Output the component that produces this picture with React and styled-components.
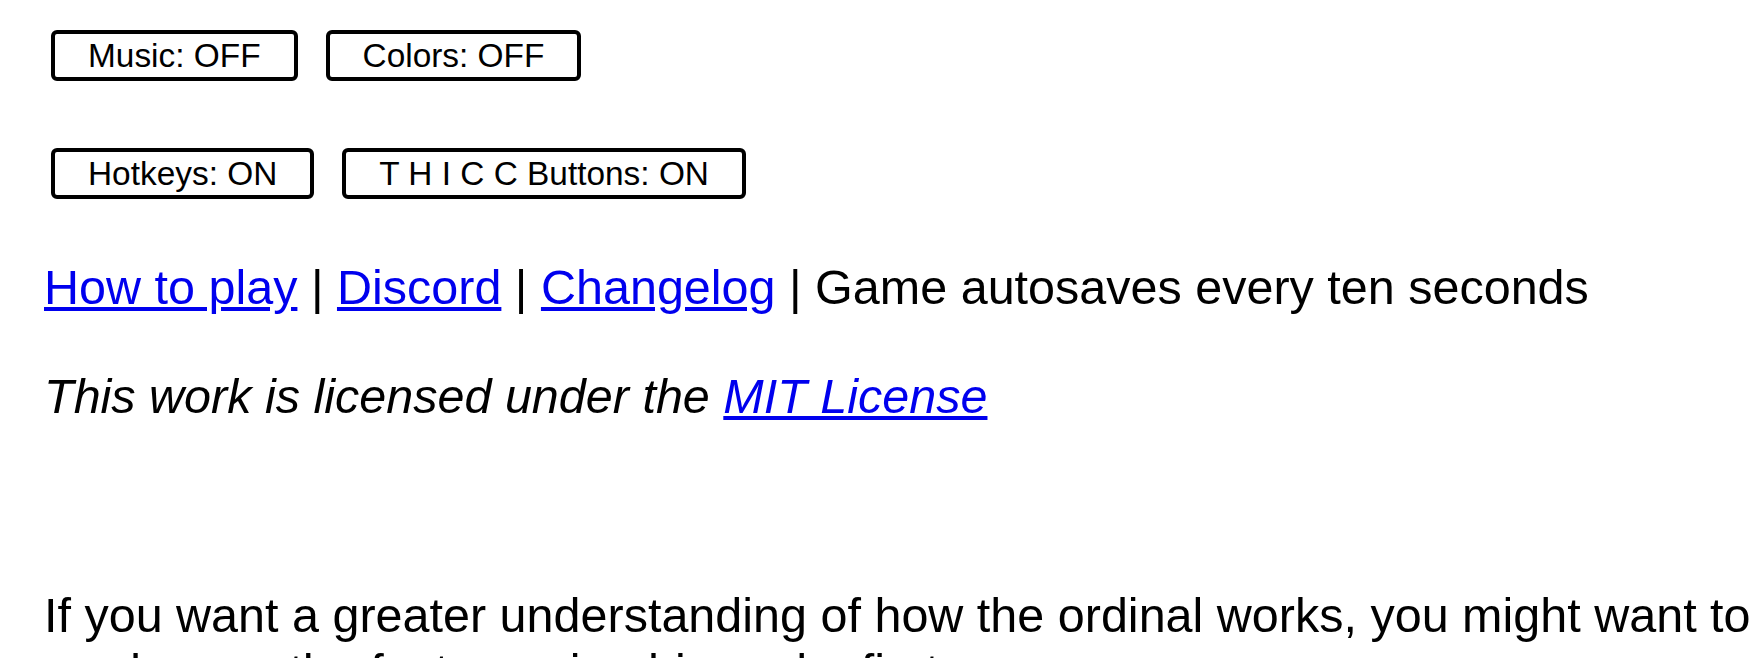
import React from 'react'
import styled, { createGlobalStyle } from 'styled-components'

const font = `"Liberation Sans", Arial, Helvetica, sans-serif`

const GlobalStyle = createGlobalStyle`
  html, body {
    margin: 0;
    padding: 0;
    background: #fff;
  }
  body {
    font-family: ${font};
    color: #000;
  }
`

const Page = styled.div`
  padding: 30px 0 0 44px;
  box-sizing: border-box;
  width: 100%;
  overflow: hidden;
`

const ButtonRow = styled.div`
  display: flex;
  gap: 28px;
  margin-left: 7px;
  margin-bottom: ${props => props.$spacing || 0}px;
`

const ToggleButton = styled.button`
  height: 51px;
  padding: 0 33px;
  box-sizing: border-box;
  border: 4px solid #000;
  border-radius: 6px;
  background: #fff;
  color: #000;
  font-family: ${font};
  font-size: 33.4px;
  line-height: 1;
  white-space: nowrap;
  cursor: pointer;
`

const Text = styled.p`
  margin: ${props => props.$top}px 0 0;
  font-size: 48.5px;
  line-height: 56px;
  font-style: ${props => (props.$italic ? 'italic' : 'normal')};
`

const Link = styled.a`
  color: #0000ee;
  text-decoration: underline;
`

const settings = [
  [
    { label: 'Music', on: false },
    { label: 'Colors', on: false },
  ],
  [
    { label: 'Hotkeys', on: true },
    { label: 'T H I C C Buttons', on: true },
  ],
]

export default function App() {
  return (
    <Page>
      <GlobalStyle />
      {settings.map((row, i) => (
        <ButtonRow key={i} $spacing={i === 0 ? 67 : 0}>
          {row.map(s => (
            <ToggleButton key={s.label}>
              {s.label}: {s.on ? 'ON' : 'OFF'}
            </ToggleButton>
          ))}
        </ButtonRow>
      ))}

      <Text $top={60}>
        <Link href="#">How to play</Link> | <Link href="#">Discord</Link> |{' '}
        <Link href="#">Changelog</Link> | Game autosaves every ten seconds
      </Text>

      <Text $top={53} $italic>
        This work is licensed under the <Link href="#">MIT License</Link>
      </Text>

      <Text $top={163}>
        If you want a greater understanding of how the ordinal works, you might want to read up on the
        fast-growing hierarchy first.
      </Text>
    </Page>
  )
}
